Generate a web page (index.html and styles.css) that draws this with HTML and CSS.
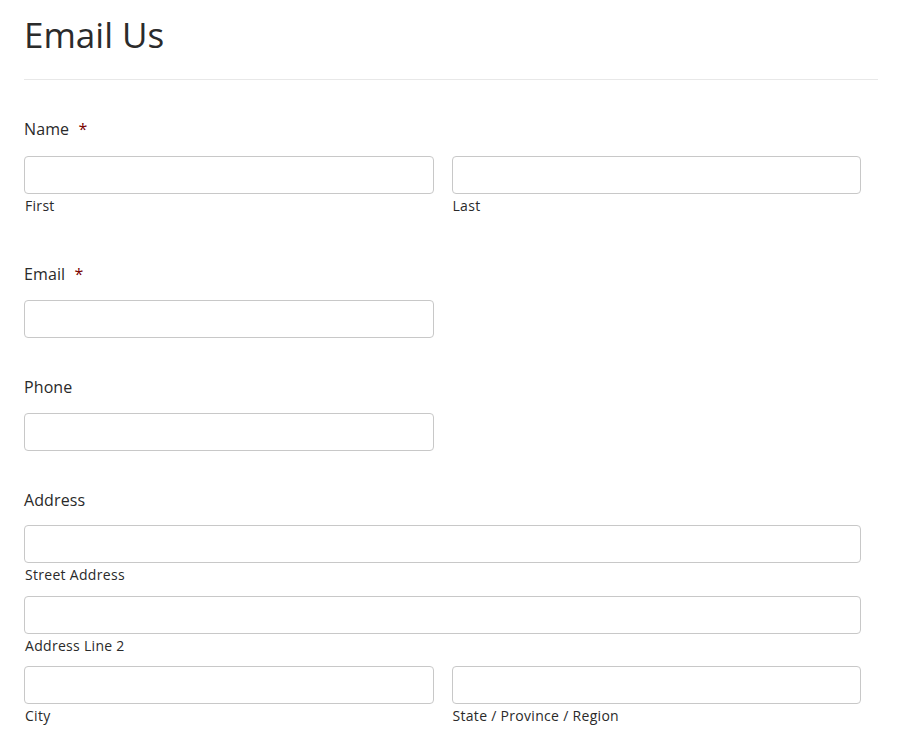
FILE: index.html
```html
<!DOCTYPE html>
<html lang="en">
<head>
<meta charset="utf-8">
<title>Email Us</title>
<link rel="stylesheet" href="styles.css">
</head>
<body>
<div class="page">
  <h1 class="title">Email Us</h1>
  <hr class="divider">
  <form class="form">
    <div class="field field-sub">
      <div class="label label-name">Name <span class="req">*</span></div>
      <div class="row two">
        <div class="cell"><input class="input" type="text"><div class="sub">First</div></div>
        <div class="cell"><input class="input" type="text"><div class="sub">Last</div></div>
      </div>
    </div>
    <div class="field">
      <div class="label">Email <span class="req">*</span></div>
      <div class="row two">
        <div class="cell"><input class="input" type="email"></div>
      </div>
    </div>
    <div class="field">
      <div class="label">Phone</div>
      <div class="row two">
        <div class="cell"><input class="input" type="tel"></div>
      </div>
    </div>
    <div class="field field-sub">
      <div class="label label-address">Address</div>
      <div class="row row-first">
        <div class="cell"><input class="input" type="text"><div class="sub">Street Address</div></div>
      </div>
      <div class="row">
        <div class="cell"><input class="input" type="text"><div class="sub">Address Line 2</div></div>
      </div>
      <div class="row two">
        <div class="cell"><input class="input" type="text"><div class="sub">City</div></div>
        <div class="cell"><input class="input" type="text"><div class="sub">State / Province / Region</div></div>
      </div>
    </div>
  </form>
</div>
</body>
</html>
```

FILE: styles.css
```css
html, body {
  margin: 0;
  padding: 0;
  background: #ffffff;
}
body {
  font-family: "Open Sans", "Liberation Sans", sans-serif;
  color: #333333;
}
.page {
  padding: 13px 25px 0 24px;
}
.title {
  margin: 0;
  font-size: 35px;
  line-height: 44px;
  font-weight: 400;
  color: #2b2b2b;
}
.divider {
  margin: 22px 0 0 0;
  border: 0;
  border-top: 1px solid #e8e8e8;
  height: 0;
}
.form {
  width: 837px;
  padding-top: 39px;
}
.field {
  margin-bottom: 39px;
}
.field-sub {
  margin-bottom: 49px;
}
.label {
  font-size: 16px;
  line-height: 20px;
  color: #2a2a2a;
  margin-bottom: 16px;
  letter-spacing: 0.1px;
}
.label-name {
  margin-bottom: 17px;
}
.label-address {
  margin-bottom: 15px;
}
.req {
  color: #790000;
  margin-left: 5px;
}
.row {
  display: grid;
  grid-template-columns: 1fr;
  margin-bottom: 11px;
}
.row.row-first {
  margin-bottom: 12px;
}
.row:last-child {
  margin-bottom: 0;
}
.row.two {
  grid-template-columns: 1fr 1fr;
  column-gap: 18px;
}
.input {
  display: block;
  width: 100%;
  box-sizing: border-box;
  height: 38px;
  margin: 0;
  border: 1px solid #c8c8c8;
  border-radius: 4px;
  background: #ffffff;
  font: inherit;
  padding: 0 8px;
}
.sub {
  margin-top: 3px;
  font-size: 14px;
  line-height: 18px;
  color: #2a2a2a;
  padding-left: 1px;
  letter-spacing: 0.3px;
}
```
